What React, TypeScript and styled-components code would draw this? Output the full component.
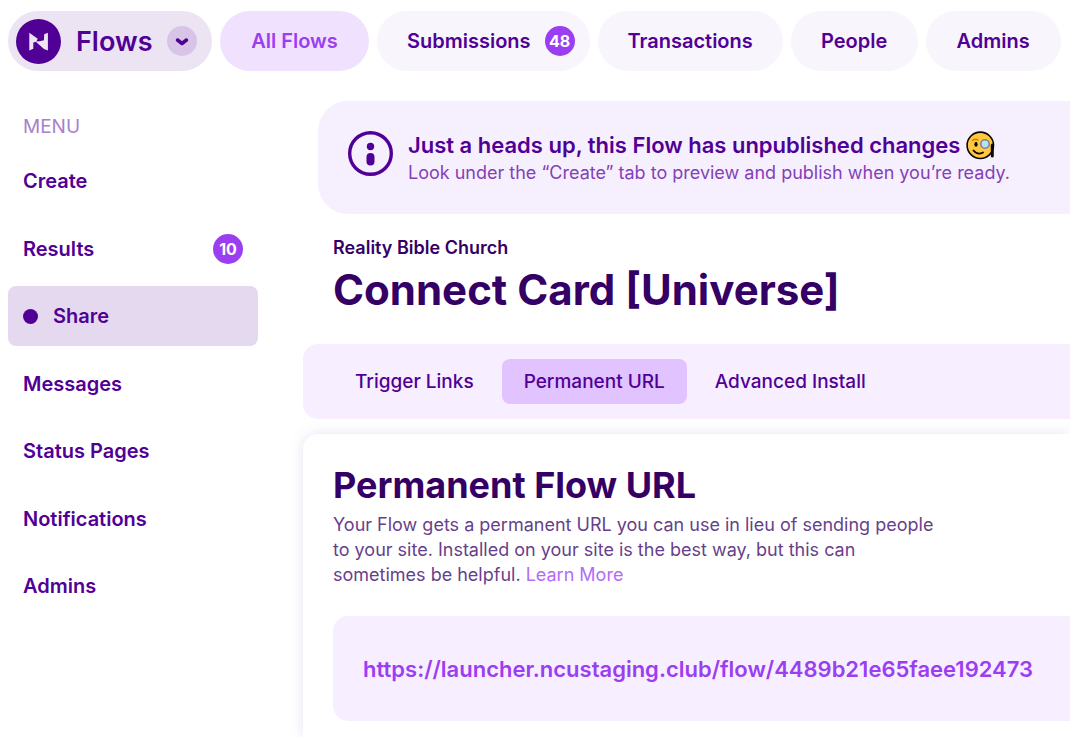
import React from "react";
import styled, { createGlobalStyle, css } from "styled-components";

const Global = createGlobalStyle`
  *, *::before, *::after { box-sizing: border-box; }
  body {
    margin: 0;
    background: #fff;
    color: #510096;
    font-family: Inter, "Liberation Sans", sans-serif;
  }
  h1, h2, p { margin: 0; }
  a { color: inherit; text-decoration: none; }
  button { font: inherit; color: inherit; border: 0; cursor: pointer; }
`;

const Page = styled.div`
  min-height: 100vh;
  display: flex;
  flex-direction: column;
  overflow-x: hidden;
`;

const TopBar = styled.nav`
  display: flex;
  gap: 8px;
  padding: 11px 8px 30px;
`;

const pill = css`
  display: flex;
  align-items: center;
  height: 60px;
  flex-shrink: 0;
  border-radius: 30px;
  white-space: nowrap;
`;

const Switcher = styled.button`
  ${pill}
  min-width: 204px;
  padding: 0 15px 0 8px;
  background: #ece4f3;
  font-size: 27px;
  font-weight: 600;
`;

const SwitcherName = styled.span`
  flex: 1;
  padding-left: 15px;
  text-align: left;
`;

const NavPill = styled.a<{ $width: number; $active?: boolean; $counted?: boolean }>`
  ${pill}
  justify-content: center;
  gap: 14px;
  min-width: ${(p) => p.$width}px;
  padding: ${(p) => (p.$counted ? "0 15px 0 30px" : "0")};
  background: ${(p) => (p.$active ? "#f0e1fe" : "#f8f5fc")};
  color: ${(p) => (p.$active ? "#9b3ef2" : "#510096")};
  font-size: 20px;
  font-weight: 600;
`;

const Badge = styled.span`
  display: grid;
  place-items: center;
  width: 30px;
  height: 30px;
  border-radius: 50%;
  background: #9b3ef2;
  color: #fff;
  font-size: 16px;
  font-weight: 700;
`;

const Body = styled.div`
  flex: 1;
  display: flex;
  gap: 45px;
  padding-left: 8px;
`;

const Sidebar = styled.aside`
  flex: 0 0 250px;
  padding-top: 10px;
`;

const MenuTitle = styled.p`
  padding-left: 15px;
  height: 40px;
  line-height: 32px;
  font-size: 19px;
  color: #a880cb;
`;

const Menu = styled.nav`
  display: flex;
  flex-direction: column;
  justify-content: space-between;
  min-height: 465px;
`;

const MenuItem = styled.a<{ $active?: boolean }>`
  display: flex;
  align-items: center;
  height: 60px;
  padding: 0 15px;
  border-radius: 8px;
  background: ${(p) => (p.$active ? "#e5d9ef" : "transparent")};
  font-size: 20px;
  font-weight: 600;
  ${Badge} { margin-left: auto; }
`;

const Dot = styled.span`
  width: 15px;
  height: 15px;
  margin-right: 15px;
  border-radius: 50%;
  background: #510096;
`;

const Main = styled.main`
  flex: 1;
  min-width: 0;
  display: flex;
  flex-direction: column;
`;

const Notice = styled.section`
  display: flex;
  align-items: flex-start;
  gap: 15px;
  margin-left: 15px;
  padding: 30px 0 27px 30px;
  border-radius: 30px 0 0 30px;
  background: #f6f0fe;
  white-space: nowrap;
`;

const NoticeTitle = styled.p`
  display: flex;
  align-items: center;
  gap: 6px;
  height: 28px;
  font-size: 22px;
  font-weight: 600;
`;

const NoticeText = styled.p`
  line-height: 28px;
  font-size: 18px;
  color: #8440b8;
`;

const Heading = styled.header`
  padding: 22px 0 24px 30px;
`;

const Owner = styled.p`
  line-height: 24px;
  font-size: 18px;
  font-weight: 600;
  color: #350065;
`;

const Title = styled.h1`
  line-height: 60px;
  font-size: 42px;
  font-weight: 700;
  color: #350065;
  white-space: nowrap;
`;

const Tabs = styled.div`
  display: flex;
  gap: 6px;
  padding: 15px 30px;
  border-radius: 15px 0 0 15px;
  background: #f7efff;
`;

const Tab = styled.button<{ $active?: boolean }>`
  height: 45px;
  padding: 0 22px;
  border-radius: 8px;
  background: ${(p) => (p.$active ? "#e1c3ff" : "transparent")};
  font-size: 19px;
  font-weight: 500;
  white-space: nowrap;
`;

const Card = styled.section`
  flex: 1;
  margin-top: 15px;
  padding: 24px 0 16px 30px;
  border-radius: 15px 0 0 0;
  box-shadow: 0 0 15px rgba(81, 0, 150, 0.12);
`;

const CardTitle = styled.h2`
  line-height: 54px;
  font-size: 36px;
  font-weight: 700;
  color: #350065;
`;

const CardText = styled.p`
  line-height: 25px;
  font-size: 18px;
  color: #683f8c;
  white-space: nowrap;
  a { color: #b36cf5; }
`;

const UrlBox = styled.div`
  display: flex;
  align-items: center;
  height: 105px;
  margin-top: 29px;
  padding-left: 30px;
  border-radius: 15px 0 0 15px;
  background: #f7efff;
  color: #9b3ef2;
  font-size: 22px;
  font-weight: 600;
  white-space: nowrap;
`;

const Logo = () => (
  <svg width="45" height="45" viewBox="0 0 45 45" aria-hidden="true">
    <circle cx="22.5" cy="22.5" r="22.5" fill="#510096" />
    <path d="M13.300 13.700 L21.700 19.800 L20.300 22.800 L17.300 23.500 V29.800 L13.300 31.500 Z" fill="#ece4f3" />
    <path d="M31.900 13.700 L28.200 15.300 L27.900 21.300 L23.800 22.300 L19.500 22.500 L28 30 L31.900 31.500 Z" fill="#ece4f3" />
  </svg>
);

const Chevron = () => (
  <svg width="30" height="30" viewBox="0 0 30 30" aria-hidden="true">
    <circle cx="15" cy="15" r="15" fill="#d7c4e7" />
    <path d="M10.500 14 L15 17.500 L19.500 14" fill="none" stroke="#510096" strokeWidth="3.500" strokeLinecap="round" strokeLinejoin="round" />
  </svg>
);

const InfoIcon = () => (
  <svg width="45" height="45" viewBox="0 0 45 45" aria-hidden="true">
    <circle cx="22.500" cy="22.500" r="20.800" fill="none" stroke="#510096" strokeWidth="3.400" />
    <circle cx="22.500" cy="15.500" r="3.700" fill="#510096" />
    <rect x="18.500" y="22" width="8" height="12.500" rx="4" fill="#510096" />
  </svg>
);

const MonocleFace = () => (
  <svg width="29" height="29" viewBox="0 0 29 29" aria-hidden="true">
    <circle cx="14.300" cy="14.300" r="13.200" fill="#ffc83d" stroke="#0b0708" strokeWidth="1.600" />
    <path d="M26.300 14 V25" stroke="#0b0708" strokeWidth="3" strokeLinecap="round" />
    <path d="M6.500 9.500 Q9 7.500 12 9" fill="none" stroke="#d67d00" strokeWidth="1.500" strokeLinecap="round" />
    <ellipse cx="10" cy="13.200" rx="1.600" ry="2.500" fill="#0b0708" />
    <circle cx="19" cy="13" r="4.200" fill="#b5e2f7" stroke="#7b8790" strokeWidth="1.600" />
    <path d="M7.500 19.500 Q11.500 24.500 17 21.500" fill="none" stroke="#0b0708" strokeWidth="1.800" strokeLinecap="round" />
  </svg>
);

const sections = [
  { label: "All Flows", width: 149, active: true },
  { label: "Submissions", width: 212, count: 48 },
  { label: "Transactions", width: 185 },
  { label: "People", width: 127 },
  { label: "Admins", width: 135 },
];

const menu = [
  { label: "Create" },
  { label: "Results", count: 10 },
  { label: "Share", active: true },
  { label: "Messages" },
  { label: "Status Pages" },
  { label: "Notifications" },
  { label: "Admins" },
];

export default function App() {
  return (
    <Page>
      <Global />
      <TopBar aria-label="Sections">
        <Switcher type="button">
          <Logo />
          <SwitcherName>Flows</SwitcherName>
          <Chevron />
        </Switcher>
        {sections.map((s) => (
          <NavPill key={s.label} href="#" $width={s.width} $active={s.active} $counted={!!s.count}>
            <span>{s.label}</span>
            {s.count && <Badge>{s.count}</Badge>}
          </NavPill>
        ))}
      </TopBar>
      <Body>
        <Sidebar>
          <MenuTitle>MENU</MenuTitle>
          <Menu aria-label="Menu">
            {menu.map((m) => (
              <MenuItem key={m.label} href="#" $active={m.active}>
                {m.active && <Dot />}
                <span>{m.label}</span>
                {m.count && <Badge>{m.count}</Badge>}
              </MenuItem>
            ))}
          </Menu>
        </Sidebar>
        <Main>
          <Notice>
            <InfoIcon />
            <div>
              <NoticeTitle>
                <span>Just a heads up, this Flow has unpublished changes</span>
                <MonocleFace />
              </NoticeTitle>
              <NoticeText>Look under the “Create” tab to preview and publish when you’re ready.</NoticeText>
            </div>
          </Notice>
          <Heading>
            <Owner>Reality Bible Church</Owner>
            <Title>Connect Card [Universe]</Title>
          </Heading>
          <Tabs>
            <Tab type="button">Trigger Links</Tab>
            <Tab type="button" $active>Permanent URL</Tab>
            <Tab type="button">Advanced Install</Tab>
          </Tabs>
          <Card>
            <CardTitle>Permanent Flow URL</CardTitle>
            <CardText>
              Your Flow gets a permanent URL you can use in lieu of sending people
              <br />
              to your site. Installed on your site is the best way, but this can
              <br />
              sometimes be helpful. <a href="#">Learn More</a>
            </CardText>
            <UrlBox>
              <a href="#">https://launcher.ncustaging.club/flow/4489b21e65faee192473</a>
            </UrlBox>
          </Card>
        </Main>
      </Body>
    </Page>
  );
}
